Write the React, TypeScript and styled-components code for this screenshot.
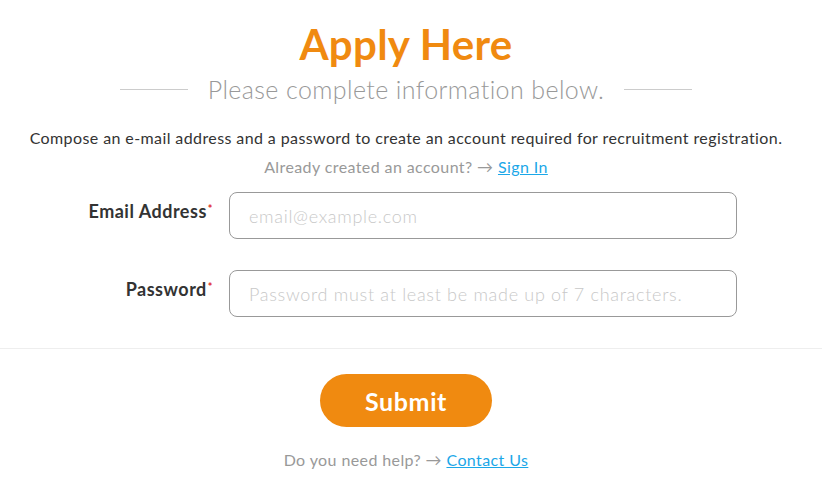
import React from "react";
import styled, { createGlobalStyle } from "styled-components";

const GlobalStyle = createGlobalStyle`
  html, body {
    margin: 0;
    padding: 0;
    background: #ffffff;
  }
  body {
    font-family: Lato, "Open Sans", Arial, sans-serif;
    color: #333333;
  }
`;

const Page = styled.div`
  width: 822px;
  padding: 0 10px 0 0;
  box-sizing: border-box;
`;

const Header = styled.header`
  display: flex;
  flex-direction: column;
  align-items: center;
  padding-top: 19px;
`;

const Title = styled.h1`
  margin: 0;
  font-size: 42px;
  line-height: 50px;
  font-weight: 700;
  letter-spacing: 0.3px;
  color: #f08a10;
`;

const SubtitleRow = styled.div`
  display: flex;
  align-items: center;
  gap: 20px;
  margin-top: 5px;
`;

const Rule = styled.span`
  width: 68px;
  height: 1px;
  background: #cccccc;
`;

const Subtitle = styled.h2`
  margin: 0;
  font-size: 25px;
  line-height: 30px;
  font-weight: 300;
  letter-spacing: 0.4px;
  color: #999999;
`;

const Intro = styled.p`
  margin: 23px 0 0;
  font-size: 16px;
  line-height: 22px;
  letter-spacing: 0.4px;
  color: #333333;
  text-align: center;
`;

const Hint = styled.p<{ $top?: number }>`
  margin: ${(p) => p.$top ?? 8}px 0 0;
  font-size: 16px;
  line-height: 20px;
  letter-spacing: 0.4px;
  color: #999999;
  text-align: center;
`;

const Link = styled.a`
  color: #1ba7e8;
  text-decoration: underline;
  cursor: pointer;
`;

const Form = styled.form`
  display: flex;
  flex-direction: column;
  gap: 31px;
  margin-top: 15px;
`;

const Field = styled.div`
  display: grid;
  grid-template-columns: 213px 508px;
  column-gap: 16px;
  align-items: start;
`;

const Label = styled.label`
  padding-top: 8px;
  text-align: right;
  font-size: 18px;
  line-height: 22px;
  font-weight: 700;
  letter-spacing: 0.5px;
  color: #333333;
`;

const Required = styled.sup`
  color: #e0292b;
  font-size: 11px;
  vertical-align: top;
  position: relative;
  top: -2px;
  margin-left: 1px;
`;

const Input = styled.input`
  height: 47px;
  box-sizing: border-box;
  border: 1px solid #999999;
  border-radius: 8px;
  padding: 0 19px;
  font-family: inherit;
  font-size: 18px;
  letter-spacing: 0.7px;
  color: #333333;
  outline: none;
  &::placeholder {
    color: #c8c8c8;
    font-weight: 300;
  }
`;

const Divider = styled.hr`
  margin: 31px -10px 0 0;
  border: none;
  border-top: 1px solid #eeeeee;
`;

const Footer = styled.div`
  display: flex;
  flex-direction: column;
  align-items: center;
  padding-top: 25px;
`;

const SubmitButton = styled.button`
  width: 172px;
  height: 53px;
  border: none;
  border-radius: 27px;
  background: #f08a10;
  color: #ffffff;
  font-family: inherit;
  font-size: 25px;
  font-weight: 700;
  letter-spacing: 0.6px;
  cursor: pointer;
`;

export default function App() {
  return (
    <>
      <GlobalStyle />
      <Page>
        <Header>
          <Title>Apply Here</Title>
          <SubtitleRow>
            <Rule />
            <Subtitle>Please complete information below.</Subtitle>
            <Rule />
          </SubtitleRow>
          <Intro>
            Compose an e-mail address and a password to create an account
            required for recruitment registration.
          </Intro>
          <Hint>
            Already created an account? &rarr; <Link>Sign In</Link>
          </Hint>
        </Header>
        <Form onSubmit={(e) => e.preventDefault()}>
          <Field>
            <Label htmlFor="email">
              Email Address<Required>*</Required>
            </Label>
            <Input id="email" type="email" placeholder="email@example.com" />
          </Field>
          <Field>
            <Label htmlFor="password">
              Password<Required>*</Required>
            </Label>
            <Input
              id="password"
              type="password"
              placeholder="Password must at least be made up of 7 characters."
            />
          </Field>
        </Form>
        <Divider />
        <Footer>
          <SubmitButton type="submit">Submit</SubmitButton>
          <Hint $top={23}>
            Do you need help? &rarr; <Link>Contact Us</Link>
          </Hint>
        </Footer>
      </Page>
    </>
  );
}
